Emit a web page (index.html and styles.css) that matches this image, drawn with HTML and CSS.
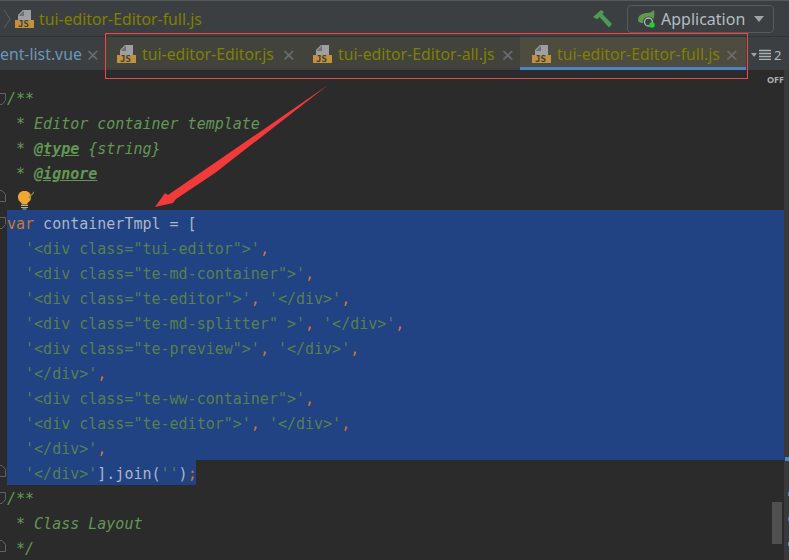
FILE: index.html
```html
<!DOCTYPE html>
<html lang="en">
<head>
<meta charset="utf-8">
<title>tui-editor-Editor-full.js</title>
<link rel="stylesheet" href="styles.css">
</head>
<body>
<div class="ide">
  <header class="nav">
    <svg class="crumb-sep" width="8" height="20" viewBox="0 0 8 20"><path d="M1 1l6 9-6 9" fill="none" stroke="#5c5f61" stroke-width="1"/></svg>
    <svg class="js" viewBox="0 0 19 18"><path d="M3 5l5-5h8v10H3z" fill="#9da0a2"/><path d="M3.500 6h5.500V.500z" fill="#6e7173"/><rect y="10" width="19" height="8" fill="#c2913c"/><text x="3" y="17" class="js-t">JS</text></svg>
    <span class="crumb">tui-editor-Editor-full.js</span>
    <svg class="hammer" viewBox="0 0 20 18"><path d="M0 7l8-7 3 2-1.500 2L19 14l-3 3.500L6.500 7 4 9.500 3 8.500z" fill="#499c54"/></svg>
    <div class="run">
      <svg class="leaf" viewBox="0 0 20 20"><path d="M1 11c0-5 5-7 9-7 3 0 5-1 7-3 1 5 0 10-3 13H5c-2 0-4-1-4-3z" fill="#5f9a4c"/><circle cx="11.500" cy="13" r="5.500" fill="#3c3f41"/><circle cx="11.500" cy="13" r="4" fill="none" stroke="#a9b7c6" stroke-width="1.300"/><circle cx="15" cy="16" r="2.800" fill="#1fd321"/></svg>
      <span>Application</span>
      <i class="caret"></i>
    </div>
  </header>
  <nav class="tabs">
    <div class="tab tab-cut"><span class="vue">ent-list.vue</span><b class="x">×</b></div>
    <div class="tab tab-a">
      <svg class="js" viewBox="0 0 19 18"><path d="M3 5l5-5h8v10H3z" fill="#9da0a2"/><path d="M3.500 6h5.500V.500z" fill="#6e7173"/><rect y="10" width="19" height="8" fill="#c2913c"/><text x="3" y="17" class="js-t">JS</text></svg>
      <span>tui-editor-Editor.js</span><b class="x">×</b>
    </div>
    <div class="tab tab-b">
      <svg class="js" viewBox="0 0 19 18"><path d="M3 5l5-5h8v10H3z" fill="#9da0a2"/><path d="M3.500 6h5.500V.500z" fill="#6e7173"/><rect y="10" width="19" height="8" fill="#c2913c"/><text x="3" y="17" class="js-t">JS</text></svg>
      <span>tui-editor-Editor-all.js</span><b class="x">×</b>
    </div>
    <div class="tab tab-c">
      <svg class="js" viewBox="0 0 19 18"><path d="M3 5l5-5h8v10H3z" fill="#9da0a2"/><path d="M3.500 6h5.500V.500z" fill="#6e7173"/><rect y="10" width="19" height="8" fill="#c2913c"/><text x="3" y="17" class="js-t">JS</text></svg>
      <span>tui-editor-Editor-full.js</span><b class="x">×</b>
    </div>
    <div class="more"><i class="caret small"></i><svg width="12" height="11" viewBox="0 0 12 11"><path d="M0 1.500h12M0 4.500h12M0 7.500h12M0 10.500h12" stroke="#a9b2b8" stroke-width="1.400"/></svg><span>2</span></div>
  </nav>
  <main class="editor">
    <div class="gutter">
      <svg class="fold f1" viewBox="0 0 6 12"><path d="M-1 .500h6.500v7l-3.500 4H-1" fill="none" stroke="#606365"/></svg>
      <svg class="fold f2" viewBox="0 0 6 12"><path d="M-1 11.500h6.500v-7L2 .500H-1" fill="none" stroke="#606365"/></svg>
      <svg class="fold f3" viewBox="0 0 6 12"><path d="M-1 .500h6.500v7l-3.500 4H-1" fill="none" stroke="#606365"/></svg>
      <svg class="fold f4" viewBox="0 0 6 12"><path d="M-1 11.500h6.500v-7L2 .500H-1" fill="none" stroke="#606365"/></svg>
      <svg class="fold f5" viewBox="0 0 6 12"><path d="M-1 .500h6.500v7l-3.500 4H-1" fill="none" stroke="#606365"/></svg>
      <svg class="fold f6" viewBox="0 0 6 12"><path d="M-1 11.500h6.500v-7L2 .500H-1" fill="none" stroke="#606365"/></svg>
    </div>
    <div class="code">
      <div class="ln doc">/**</div>
      <div class="ln doc"> * Editor container template</div>
      <div class="ln doc"> * <b class="tag">@type</b> {string}</div>
      <div class="ln doc"> * <b class="tag">@ignore</b></div>
      <div class="ln doc"></div>
      <div class="ln sel"><span class="kw">var</span> containerTmpl = [</div>
      <div class="ln sel">  <span class="str">'&lt;div class="tui-editor"&gt;'</span><span class="kw">,</span></div>
      <div class="ln sel">  <span class="str">'&lt;div class="te-md-container"&gt;'</span><span class="kw">,</span></div>
      <div class="ln sel">  <span class="str">'&lt;div class="te-editor"&gt;'</span><span class="kw">,</span> <span class="str">'&lt;/div&gt;'</span><span class="kw">,</span></div>
      <div class="ln sel">  <span class="str">'&lt;div class="te-md-splitter" &gt;'</span><span class="kw">,</span> <span class="str">'&lt;/div&gt;'</span><span class="kw">,</span></div>
      <div class="ln sel">  <span class="str">'&lt;div class="te-preview"&gt;'</span><span class="kw">,</span> <span class="str">'&lt;/div&gt;'</span><span class="kw">,</span></div>
      <div class="ln sel">  <span class="str">'&lt;/div&gt;'</span><span class="kw">,</span></div>
      <div class="ln sel">  <span class="str">'&lt;div class="te-ww-container"&gt;'</span><span class="kw">,</span></div>
      <div class="ln sel">  <span class="str">'&lt;div class="te-editor"&gt;'</span><span class="kw">,</span> <span class="str">'&lt;/div&gt;'</span><span class="kw">,</span></div>
      <div class="ln sel">  <span class="str">'&lt;/div&gt;'</span><span class="kw">,</span></div>
      <div class="ln sel sel-end">  <span class="str">'&lt;/div&gt;'</span>].join(<span class="str">''</span>)<span class="kw">;</span></div>
      <div class="ln doc">/**</div>
      <div class="ln doc"> * Class Layout</div>
      <div class="ln doc"> */</div>
    </div>
    <aside class="stripe">
      <i class="mark m1"></i><i class="mark m2"></i><i class="mark m3"></i><i class="mark m4"></i>
    </aside>
    <div class="thumb"></div>
    <span class="off">OFF</span>
  </main>
  <svg class="bulb" viewBox="0 0 17 19"><circle cx="7.500" cy="6.200" r="6.500" fill="#f0a732"/><path d="M4.500 12h6v1.500h-6z" fill="#f0a732"/><path d="M4 14.500h7M4 16.500h7M5.500 18h4" stroke="#aeb0b2" stroke-width="1.200"/><path d="M12 7l5-6" stroke="#6a8f4f" stroke-width="1.200" fill="none"/></svg>
  <div class="red-box"></div>
  <svg class="arrow" width="789" height="560" viewBox="0 0 789 560"><path d="M328 85L168 195l-3-2-10 14 18-4 3-4L215 173z" fill="#f23a3a"/></svg>
</div>
</body>
</html>
```

FILE: styles.css
```css
* { box-sizing: border-box; }
html, body { margin: 0; padding: 0; background: #2b2b2b; }
.ide { position: relative; width: 789px; height: 560px; overflow: hidden; font-family: "Noto Sans", "Open Sans", sans-serif; }

.nav { height: 37px; background: #3c3f41; border-top: 1px solid #55585a; border-bottom: 1px solid #323232; display: flex; align-items: center; padding: 0 15px 0 3px; }
.crumb-sep { margin-right: 4px; }
.js { width: 19px; height: 18px; flex: none; }
.js-t { font: bold 9px "DejaVu Sans Mono", monospace; fill: #3c3f41; }
.crumb { margin-left: 5px; font-size: 15.800px; color: #808000; }
.hammer { width: 20px; height: 18px; margin-left: auto; margin-right: 14px; }
.run { width: 147px; height: 28px; border: 1px solid #585b5d; border-radius: 4px; display: flex; align-items: center; padding: 0 9px; color: #b4bcc2; font-size: 16px; }
.leaf { width: 20px; height: 20px; margin-right: 4px; }
.caret { display: block; width: 0; height: 0; border: 5.500px solid transparent; border-top: 6px solid #a0a4a7; border-bottom: 0; margin-left: auto; }
.caret.small { border-width: 3px; border-top-width: 4px; border-bottom-width: 0; margin: 0 2px 0 0; }

.tabs { height: 33px; background: #3c3f41; display: flex; align-items: stretch; font-size: 15.800px; color: #808000; }
.tab { display: flex; align-items: center; flex: none; height: 31px; padding-top: 2px; position: relative; }
.tab span { white-space: nowrap; }
.x { font-weight: 400; font-size: 22px; color: #6a6d6f; margin-left: auto; line-height: 1; }
.vue { color: #6897bb; }
.tab-cut { width: 106px; padding-right: 7px; }
.tab-a { width: 196px; padding-right: 7px; padding-left: 11px; background: #42433d; }
.tab-b { width: 218px; padding-right: 6px; padding-left: 11px; background: #42433d; }
.tab-c { width: 226px; height: 34px; padding: 3px 8px 0 12px; background: #4e4b3f; border-bottom: 4px solid #4a84c4; }
.tab-a span, .tab-b span, .tab-c span { margin-left: 6px; }
.more { display: flex; align-items: center; margin-left: 5px; padding-top: 2px; color: #b4bcc2; font-size: 13px; height: 33px; }
.more span { margin-left: 3px; }

.editor { position: relative; height: 490px; display: flex; background: #2b2b2b; font: 15px/29px "DejaVu Sans Mono", monospace; color: #a9b7c6; }
.gutter { position: relative; width: 7px; flex: none; }
.fold { position: absolute; left: 0; width: 6px; height: 12px; }
.f1 { top: 23px; }
.f2 { top: 120px; }
.f3 { top: 147px; }
.f4 { top: 395px; }
.f5 { top: 422px; }
.f6 { top: 470px; }
.code { flex: 1; padding-top: 15px; min-width: 0; }
.ln { height: 25px; white-space: pre; }
.doc { font-style: italic; color: #629755; }
.tag { font-weight: bold; text-decoration: underline; color: #629755; }
.sel { background: #214283; }
.sel-end { width: 189px; }
.kw { color: #cc7832; }
.str { color: #578050; }
.stripe { position: relative; width: 5px; flex: none; background: #37393a; }
.mark { position: absolute; right: 0; display: block; width: 1px; height: 4px; background: #4a88c7; }
.m1 { top: 387px; width: 4px; }
.m2 { top: 422px; }
.m3 { top: 447px; }
.m4 { top: 472px; }
.thumb { position: absolute; left: 772px; top: 432px; width: 10px; height: 42px; background: #505050; }
.off { position: absolute; left: 767px; top: 4px; font: bold 9px/12px "Noto Sans", sans-serif; color: #a9b2b8; }

.bulb { position: absolute; left: 17px; top: 191px; width: 17px; height: 19px; }
.red-box { position: absolute; left: 105px; top: 33px; width: 643px; height: 46px; border: 1px solid #f04848; }
.arrow { position: absolute; left: 0; top: 0; pointer-events: none; }
```
